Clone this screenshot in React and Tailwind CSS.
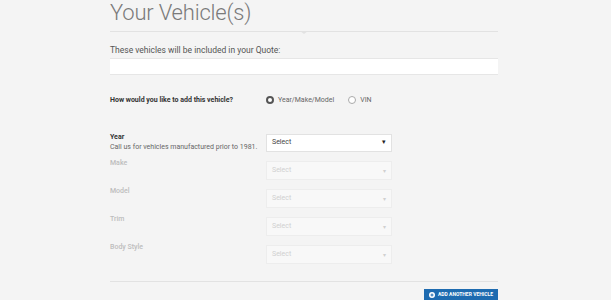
export default function App() {
  const fields = [
    { label: 'Make' },
    { label: 'Model' },
    { label: 'Trim' },
    { label: 'Body Style' },
  ]

  return (
    <div className="w-[611px] h-[300px] overflow-hidden bg-[#f4f4f4] font-['Roboto',sans-serif]">
      <div className="ml-[110px] w-[388px]">
        {/* Heading */}
        <h1 className="pt-[1px] text-[22px] leading-[24px] font-light text-[#7a7a7a] tracking-[-0.2px]">Your Vehicle(s)</h1>
        <div className="relative mt-[6px] h-px bg-[#e2e2e2]">
          <div className="absolute left-[190px] top-0 w-0 h-0 border-l-[4px] border-r-[4px] border-t-[3px] border-l-transparent border-r-transparent border-t-[#e2e2e2]" />
        </div>

        <p className="mt-[13px] text-[8.5px] leading-[10px] text-[#555]">These vehicles will be included in your Quote:</p>
        <div className="mt-[3px] h-[17px] bg-white border-y border-[#e6e6e6]" />

        {/* How to add */}
        <div className="mt-[20px] flex items-center">
          <div className="w-[156px] text-[7px] font-bold text-[#333]">How would you like to add this vehicle?</div>
          <label className="flex items-center gap-[4px] text-[7px] text-[#666]">
            <span className="w-[8px] h-[8px] rounded-full border-[2.5px] border-[#555] bg-white" />
            Year/Make/Model
          </label>
          <label className="ml-[14px] flex items-center gap-[4px] text-[7px] text-[#666]">
            <span className="w-[8px] h-[8px] rounded-full border border-[#aaa] bg-white" />
            VIN
          </label>
        </div>

        {/* Year */}
        <div className="mt-[28px] flex">
          <div className="w-[156px]">
            <div className="text-[7px] leading-[9px] font-bold text-[#333] -mt-[1px]">Year</div>
            <div className="text-[7px] leading-[9px] text-[#666] mt-[1px]">Call us for vehicles manufactured prior to 1981.</div>
          </div>
          <div className="w-[126px] h-[18px] bg-white border border-[#e2e2e2] flex items-center justify-between px-[5px]">
            <span className="text-[7px] text-[#444]">Select</span>
            <span className="text-[7px] text-[#222]">▾</span>
          </div>
        </div>

        {fields.map((f) => (
          <div key={f.label} className="flex mt-[9px]">
            <div className="w-[156px] text-[7px] leading-[9px] font-medium text-[#bdbdbd] -mt-[2px]">{f.label}</div>
            <div className="w-[126px] h-[19px] bg-[#f8f8f8] border border-[#ededed] flex items-center justify-between px-[5px]">
              <span className="text-[7px] text-[#d0d0d0]">Select</span>
              <span className="text-[6px] text-[#d0d0d0]">▾</span>
            </div>
          </div>
        ))}

        <div className="mt-[17px] h-px bg-[#e2e2e2]" />
        <div className="mt-[7px] flex justify-end">
          <button className="h-[12px] px-[5px] bg-[#1e6bb0] text-white text-[5px] font-bold flex items-center gap-[3px]">
            <svg width="6" height="6" viewBox="0 0 12 12">
              <circle cx="6" cy="6" r="6" fill="white" />
              <path d="M6 3v6M3 6h6" stroke="#1e6bb0" strokeWidth="2" />
            </svg>
            ADD ANOTHER VEHICLE
          </button>
        </div>
      </div>
    </div>
  )
}
